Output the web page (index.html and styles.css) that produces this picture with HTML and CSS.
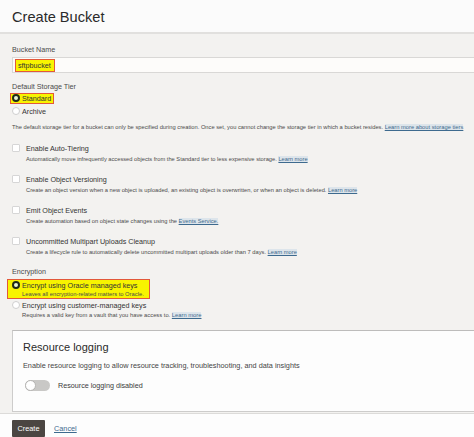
FILE: index.html
```html
<!DOCTYPE html>
<html>
<head>
<meta charset="utf-8">
<link rel="stylesheet" href="styles.css">
</head>
<body>
<div class="header"><h1 class="title">Create Bucket</h1></div>
<div class="form">
  <div class="label">Bucket Name</div>
  <div class="input"><span class="hl hl-input">sftpbucket</span></div>

  <div class="label label-tier">Default Storage Tier</div>
  <div class="radio-row"><span class="hl hl-std"><span class="radio on"></span><span class="rtext">Standard</span></span></div>
  <div class="radio-row r2"><span class="radio"></span><span class="rtext">Archive</span></div>
  <div class="desc tier-desc">The default storage tier for a bucket can only be specified during creation. Once set, you cannot change the storage tier in which a bucket resides. <a class="link">Learn more about storage tiers</a></div>

  <div class="checks">
    <div class="check">
      <div class="check-row"><span class="box"></span><span class="ctext">Enable Auto-Tiering</span></div>
      <div class="desc cdesc">Automatically move infrequently accessed objects from the Standard tier to less expensive storage. <a class="link">Learn more</a></div>
    </div>
    <div class="check">
      <div class="check-row"><span class="box"></span><span class="ctext">Enable Object Versioning</span></div>
      <div class="desc cdesc">Create an object version when a new object is uploaded, an existing object is overwritten, or when an object is deleted. <a class="link">Learn more</a></div>
    </div>
    <div class="check">
      <div class="check-row"><span class="box"></span><span class="ctext">Emit Object Events</span></div>
      <div class="desc cdesc">Create automation based on object state changes using the <a class="link">Events Service.</a></div>
    </div>
    <div class="check">
      <div class="check-row"><span class="box"></span><span class="ctext">Uncommitted Multipart Uploads Cleanup</span></div>
      <div class="desc cdesc">Create a lifecycle rule to automatically delete uncommitted multipart uploads older than 7 days. <a class="link">Learn more</a></div>
    </div>
  </div>

  <div class="label label-enc">Encryption</div>
  <div class="hl hl-enc">
    <div class="enc-row"><span class="radio on"></span><span class="rtext">Encrypt using Oracle managed keys</span></div>
    <div class="desc edesc">Leaves all encryption-related matters to Oracle.</div>
  </div>
  <div class="enc-row r-cust"><span class="radio"></span><span class="rtext">Encrypt using customer-managed keys</span></div>
  <div class="desc edesc">Requires a valid key from a vault that you have access to. <a class="link">Learn more</a></div>

  <div class="panel">
    <div class="panel-title">Resource logging</div>
    <div class="panel-desc">Enable resource logging to allow resource tracking, troubleshooting, and data insights</div>
    <div class="toggle-row"><span class="toggle"><span class="knob"></span></span><span class="ttext">Resource logging disabled</span></div>
  </div>
</div>
<div class="footer">
  <span class="btn">Create</span><a class="cancel">Cancel</a>
</div>
</body>
</html>
```
FILE: styles.css
```css
html, body {
  margin: 0;
  padding: 0;
}
body {
  width: 474px;
  height: 437px;
  overflow: hidden;
  background: #f3f2f0;
  font-family: "Liberation Sans", Arial, sans-serif;
  color: #333;
}
.header {
  height: 32px;
  background: #fbfbfb;
  border-bottom: 2px solid #e1e0de;
  display: flex;
  align-items: center;
  padding-left: 12px;
}
.title {
  margin: 0;
  font-weight: normal;
  font-size: 14.6px;
  color: #2a2a2a;
  position: relative;
  top: 1px;
}
.form {
  padding: 11px 0 0 12px;
}
.label {
  font-size: 7.2px;
  line-height: 10px;
  height: 10px;
  color: #4a4a4a;
}
.input {
  margin-top: 2px;
  height: 14px;
  background: #fdfcfa;
  border-top: 1px solid #d9d8d6;
  border-bottom: 1px solid #d9d8d6;
  border-left: 1px solid #d9d8d6;
  display: flex;
  align-items: center;
  padding-left: 2px;
}
.hl {
  background: #f8f400;
  border: 1px solid #e2583a;
  box-sizing: border-box;
}
.hl-input {
  display: inline-block;
  height: 13px;
  line-height: 11px;
  font-size: 7.2px;
  padding: 0 2px;
  color: #333;
  width: 40px;
}
.label-tier {
  margin-top: 9px;
}
.radio-row {
  height: 12px;
  display: flex;
  align-items: center;
}
.r2 {
  margin-top: 1px;
}
.hl-std {
  display: inline-flex;
  align-items: center;
  height: 11px;
  width: 44px;
  margin-left: -2px;
  padding-left: 1px;
}
.radio {
  width: 8px;
  height: 8px;
  box-sizing: border-box;
  border-radius: 50%;
  background: #fff;
  border: 1px solid #cfcfcf;
  flex: none;
}
.radio.on {
  background: #e9f5d5;
  border: 2.4px solid #1f2a18;
}
.rtext {
  font-size: 7.2px;
  margin-left: 2px;
  color: #333;
}
.desc {
  font-size: 5.75px;
  line-height: 8px;
  height: 8px;
  color: #4b4b4b;
  white-space: nowrap;
}
.tier-desc {
  margin-top: 6px;
}
.link {
  color: #3d6a8e;
  text-decoration: underline;
  background: #dde5eb;
}
.checks {
  margin-top: 11px;
  display: flex;
  flex-direction: column;
  gap: 10px;
}
.check-row {
  height: 12px;
  display: flex;
  align-items: center;
}
.box {
  width: 8px;
  height: 8px;
  box-sizing: border-box;
  background: #fff;
  border: 1px solid #d6d6d6;
  border-radius: 1px;
  flex: none;
}
.ctext {
  font-size: 7.2px;
  margin-left: 6px;
  color: #333;
}
.cdesc {
  margin-top: 1px;
  padding-left: 14px;
  font-size: 5.72px;
}
.label-enc {
  margin-top: 11px;
}
.hl-enc {
  margin-top: 2px;
  margin-left: -5px;
  width: 143px;
  height: 20px;
  padding-left: 4px;
}
.enc-row {
  height: 10px;
  display: flex;
  align-items: center;
}
.hl-enc .edesc {
  height: 8px;
}
.edesc {
  padding-left: 10px;
  font-size: 5.8px;
}
.r-cust {
  height: 12px;
}
.panel {
  margin-top: 11px;
  background: #fdfdfd;
  border: 1px solid #cdcccb;
  border-right: none;
  border-top-color: #bdbcbb;
  padding: 8px 0 0 10px;
  height: 72px;
}
.panel-title {
  font-size: 11px;
  line-height: 16px;
  color: #2a2a2a;
}
.panel-desc {
  margin-top: 6px;
  font-size: 7.3px;
  line-height: 10px;
  color: #454545;
  white-space: nowrap;
}
.toggle-row {
  margin-top: 8px;
  height: 12px;
  display: flex;
  align-items: center;
  padding-left: 2px;
}
.toggle {
  width: 25px;
  height: 11px;
  border-radius: 6px;
  background: #c9c8c6;
  position: relative;
  flex: none;
}
.knob {
  position: absolute;
  left: 0;
  top: 0;
  width: 11px;
  height: 11px;
  box-sizing: border-box;
  border-radius: 50%;
  background: #fff;
  border: 1px solid #b5b4b2;
}
.ttext {
  margin-left: 8px;
  font-size: 7.2px;
  color: #3a3a3a;
}
.footer {
  margin-top: 1px;
  border-top: 1px solid #dcdbd9;
  background: #fdfdfd;
  height: 17px;
  padding: 6px 0 0 12px;
  display: flex;
  align-items: flex-start;
}
.btn {
  display: inline-flex;
  align-items: center;
  justify-content: center;
  width: 33px;
  height: 17px;
  background: #4b4642;
  color: #fff;
  font-size: 7.3px;
  border-radius: 1px;
}
.cancel {
  margin-left: 9px;
  margin-top: 4px;
  font-size: 7.3px;
  color: #3d6a8e;
  text-decoration: underline;
}
```
